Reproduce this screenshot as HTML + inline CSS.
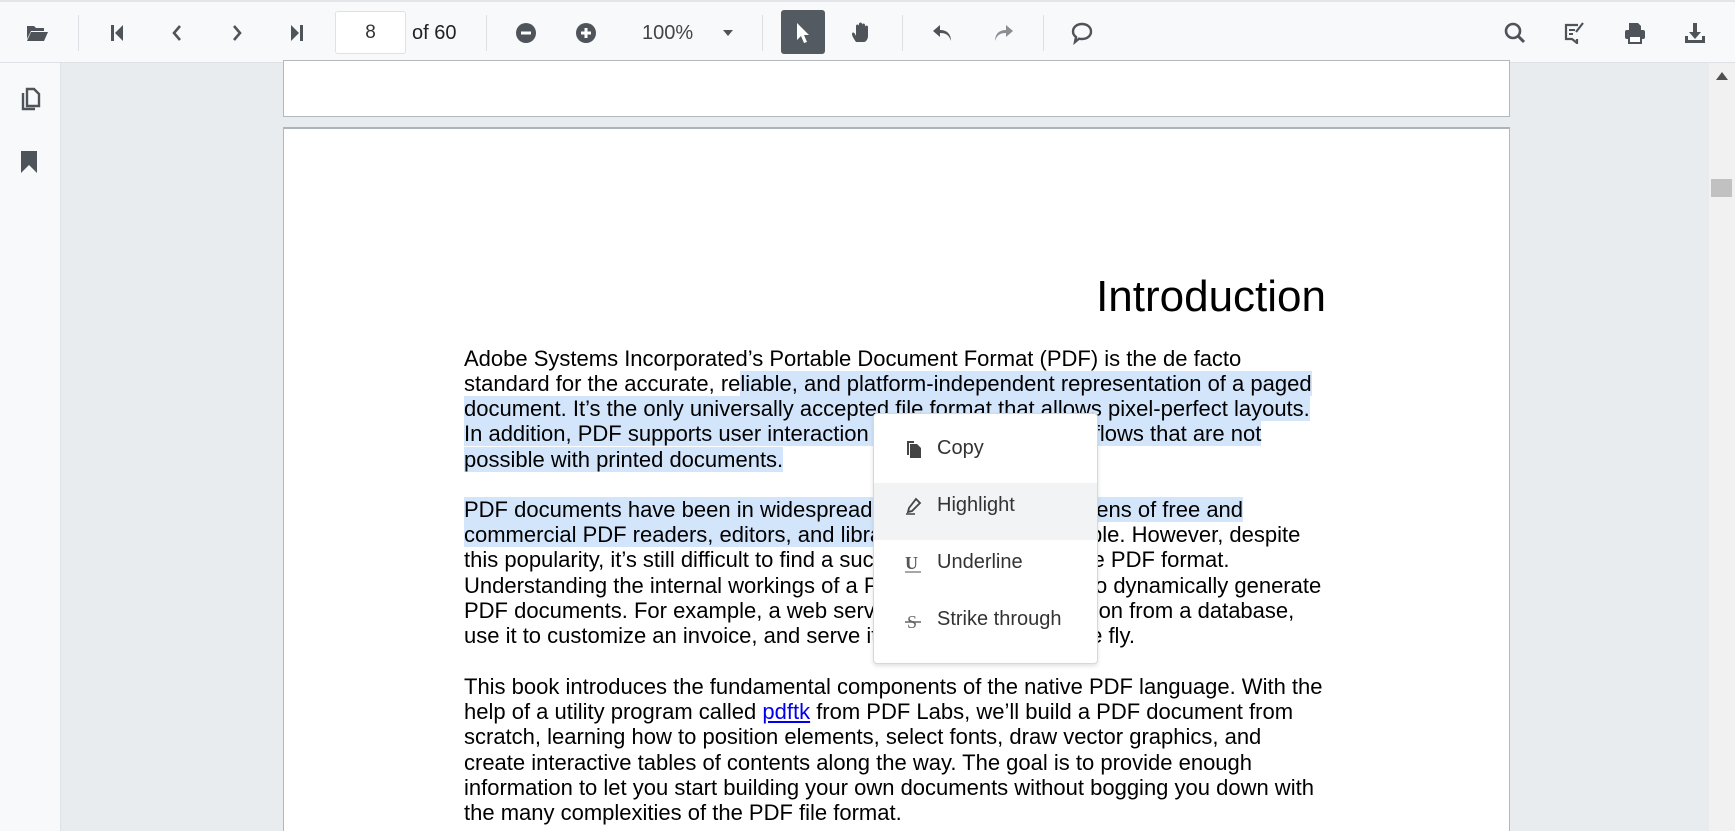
<!DOCTYPE html>
<html style="overflow:hidden;width:1735px;height:831px"><head><meta charset="utf-8"><style>
*{margin:0;padding:0;box-sizing:border-box}
body{width:1735px;height:831px;overflow:hidden;background:#e9ecef;font-family:"Liberation Sans",Arial,sans-serif;position:relative}
.tb{position:absolute;left:0;top:0;width:1735px;height:63px;background:#f8f9fa;border-bottom:1px solid #dee2e6;border-top:2px solid #e3e5e8}
.ic{position:absolute;top:31px;transform:translate(-50%,-50%)}
.sep{position:absolute;top:13px;width:1px;height:36px;background:#dcdfe3}
.side{position:absolute;left:0;top:63px;width:61px;height:768px;background:#f8f9fa;border-right:1px solid #dee2e6}
.page{position:absolute;left:283px;width:1227px;background:#fff;border:1px solid #b3b8bd}
.ln{position:absolute;left:464px;font-size:22px;line-height:25px;height:25px;white-space:nowrap;color:#000}
.hl{background:#d3e5fb}
.menu{position:absolute;left:873px;top:413px;width:225px;height:251px;background:#fff;border:1px solid #d6d9dc;border-radius:4px;box-shadow:0 2px 4px rgba(0,0,0,.12)}
.mi{position:absolute;left:0;width:223px;height:57px;font-size:20px;color:#333}
.mi span{position:absolute;left:63px;top:11px}
.mi svg{position:absolute;left:30px;top:14px}
</style></head><body>
<div class="tb">
<svg class="ic" style="left:37px" width="22" height="18" viewBox="0 0 22 18"><path d="M1 2h7l2 2h8v3H5L1 15z" fill="#4f545a"/><path d="M5 8h17l-4 9H1z" fill="#4f545a"/></svg>
<div class="sep" style="left:78px"></div>
<svg class="ic" style="left:117px" width="14" height="18" viewBox="0 0 14 18"><rect x="1" y="1" width="3" height="16" fill="#4f545a"/><path d="M13 1v16L5 9z" fill="#4f545a"/></svg>
<svg class="ic" style="left:177px" width="12" height="18" viewBox="0 0 12 18"><path d="M9 2L3 9l6 7" stroke="#4f545a" stroke-width="2.6" fill="none"/></svg>
<svg class="ic" style="left:237px" width="12" height="18" viewBox="0 0 12 18"><path d="M3 2l6 7-6 7" stroke="#4f545a" stroke-width="2.6" fill="none"/></svg>
<svg class="ic" style="left:297px" width="14" height="18" viewBox="0 0 14 18"><rect x="10" y="1" width="3" height="16" fill="#4f545a"/><path d="M1 1v16l8-8z" fill="#4f545a"/></svg>
<div style="position:absolute;left:335px;top:9px;width:71px;height:43px;background:#fff;border:1px solid #dee2e6;border-radius:3px;font-size:19px;text-align:center;line-height:41px;color:#333">8</div>
<div style="position:absolute;left:412px;top:20px;font-size:20px;color:#222">of 60</div>
<div class="sep" style="left:486px"></div>
<svg class="ic" style="left:526px" width="22" height="22" viewBox="0 0 22 22"><circle cx="11" cy="11" r="10" fill="#4f545a"/><rect x="6" y="9.5" width="10" height="3" fill="#fff"/></svg>
<svg class="ic" style="left:586px" width="22" height="22" viewBox="0 0 22 22"><circle cx="11" cy="11" r="10" fill="#4f545a"/><rect x="6" y="9.5" width="10" height="3" fill="#fff"/><rect x="9.5" y="6" width="3" height="10" fill="#fff"/></svg>
<div style="position:absolute;left:642px;top:20px;font-size:20px;color:#444">100%</div>
<svg class="ic" style="left:728px" width="10" height="6" viewBox="0 0 10 6"><path d="M0 0h10L5 6z" fill="#4f545a"/></svg>
<div class="sep" style="left:762px"></div>
<div style="position:absolute;left:781px;top:8px;width:44px;height:44px;background:#545a61;border-radius:3px"></div>
<svg class="ic" style="left:803px" width="14" height="22" viewBox="0 0 14 22"><path d="M1 1v17l4-4 3 7 3-1-3-7h5z" fill="#fff"/></svg>
<svg class="ic" style="left:862px" width="22" height="22" viewBox="0 0 22 22"><path d="M5 20c-2-3-4-6-4-8 0-2 2-2 3 0l1 2V4c0-2 3-2 3 0V2c0-2 3-2 3 0v1c0-2 3-2 3 0v2c0-2 3-2 3 0v9c0 3-2 6-4 6z" fill="#4f545a"/></svg>
<div class="sep" style="left:902px"></div>
<svg class="ic" style="left:943px" width="22" height="20" viewBox="0 0 22 20"><path d="M8 2L1 8l7 6v-4c6 0 9 2 11 8 0-7-4-11-11-11z" fill="#4f545a"/></svg>
<svg class="ic" style="left:1003px" width="22" height="20" viewBox="0 0 22 20"><path d="M14 2l7 6-7 6v-4c-6 0-9 2-11 8 0-7 4-11 11-11z" fill="#8b8f94"/></svg>
<div class="sep" style="left:1043px"></div>
<svg class="ic" style="left:1082px" width="24" height="24" viewBox="0 0 24 24"><path d="M12 3c5 0 9 3 9 7.5S17 18 12 18c-1 0-2 0-3-.3L5 21l1-5c-2-1.5-3-3.5-3-5.5C3 6 7 3 12 3z" stroke="#4f545a" stroke-width="2.4" fill="none"/></svg>
<svg class="ic" style="left:1515px" width="22" height="22" viewBox="0 0 22 22"><circle cx="9" cy="9" r="7" stroke="#4f545a" stroke-width="2.6" fill="none"/><path d="M14 14l6 6" stroke="#4f545a" stroke-width="3"/></svg>
<svg class="ic" style="left:1575px" width="22" height="22" viewBox="0 0 22 22"><path d="M14 3H2v14h6l5 4v-4" stroke="#4f545a" stroke-width="2.2" fill="none"/><path d="M5 8h6M5 12h4" stroke="#4f545a" stroke-width="2"/><path d="M19 1l-7 9" stroke="#4f545a" stroke-width="2.2"/></svg>
<svg class="ic" style="left:1635px" width="22" height="22" viewBox="0 0 22 22"><path d="M5 1h9l3 3v4H5z" fill="#4f545a"/><rect x="1" y="8" width="20" height="9" rx="2" fill="#4f545a"/><rect x="5" y="14" width="12" height="7" fill="#fff" stroke="#4f545a" stroke-width="2"/></svg>
<svg class="ic" style="left:1695px" width="22" height="22" viewBox="0 0 22 22"><path d="M9 1h4v9h4l-6 7-6-7h4z" fill="#4f545a"/><rect x="1" y="18" width="20" height="3" fill="#4f545a"/><rect x="1" y="14" width="3" height="6" fill="#4f545a"/><rect x="18" y="14" width="3" height="6" fill="#4f545a"/></svg>
</div>
<div class="side">
<svg style="position:absolute;left:19px;top:24px" width="22" height="24" viewBox="0 0 22 24"><path d="M8 2h7l5 5v12H8z" stroke="#4f545a" stroke-width="2.4" fill="none"/><path d="M4 6v16h12" stroke="#4f545a" stroke-width="2.4" fill="none"/></svg>
<svg style="position:absolute;left:20px;top:88px" width="18" height="22" viewBox="0 0 18 22"><path d="M1 0h16v22l-8-8-8 8z" fill="#4f545a"/></svg>
</div>
<div class="page" style="top:60px;height:57px"></div>
<div class="page" style="top:127px;height:704px;border-bottom:none;border-top:2px solid #adb3b9"></div>
<div style="position:absolute;left:1709px;top:63px;width:26px;height:768px;background:#f1f1f1"></div>
<svg style="position:absolute;left:1716px;top:72px" width="12" height="8" viewBox="0 0 12 8"><path d="M6 0l6 8H0z" fill="#505050"/></svg>
<div style="position:absolute;left:1711px;top:179px;width:21px;height:18px;background:#c1c1c1"></div>
<div style="position:absolute;right:409px;top:272px;font-size:44px;color:#000">Introduction</div>
<div class="ln" style="top:346px">Adobe Systems Incorporated’s Portable Document Format (PDF) is the de facto</div>
<div class="ln" style="top:371px">standard for the accurate, re<span class="hl">liable, and platform-independent representation of a paged</span></div>
<div class="ln" style="top:396px"><span class="hl">document. It’s the only universally accepted file format that allows pixel-perfect layouts.</span></div>
<div class="ln" style="top:421px"><span class="hl">In addition, PDF supports user interaction and collaborative workflows that are not</span></div>
<div class="ln" style="top:447px"><span class="hl">possible with printed documents.</span></div>
<div class="ln" style="top:497px"><span class="hl">PDF documents have been in widespread use for years, and dozens of free and</span></div>
<div class="ln" style="top:522px"><span class="hl">commercial PDF readers, editors, and libra</span>ries are readily available. However, despite</div>
<div class="ln" style="top:547px">this popularity, it’s still difficult to find a succinct guide to the native PDF format.</div>
<div class="ln" style="top:573px">Understanding the internal workings of a PDF makes it possible to dynamically generate</div>
<div class="ln" style="top:598px">PDF documents. For example, a web server can extract information from a database,</div>
<div class="ln" style="top:623px">use it to customize an invoice, and serve it to the customer on the fly.</div>
<div class="ln" style="top:674px">This book introduces the fundamental components of the native PDF language. With the</div>
<div class="ln" style="top:699px">help of a utility program called <span style="color:#00e;text-decoration:underline">pdftk</span> from PDF Labs, we’ll build a PDF document from</div>
<div class="ln" style="top:724px">scratch, learning how to position elements, select fonts, draw vector graphics, and</div>
<div class="ln" style="top:750px">create interactive tables of contents along the way. The goal is to provide enough</div>
<div class="ln" style="top:775px">information to let you start building your own documents without bogging you down with</div>
<div class="ln" style="top:800px">the many complexities of the PDF file format.</div>
<div class="menu">
<div class="mi" style="top:12px"><svg width="18" height="18" viewBox="0 0 18 18"><path d="M3 1h7v2H5v12H3z" fill="#444"/><path d="M6 4h7l4 4v10H6z" fill="#444"/></svg><span>Copy</span></div>
<div class="mi" style="top:69px;background:#f2f3f5"><svg width="18" height="18" viewBox="0 0 18 18"><path d="M12 2l4 4-8 8-4 1 1-4z" stroke="#444" stroke-width="1.8" fill="none"/><path d="M2 17h9" stroke="#444" stroke-width="1.5"/></svg><span>Highlight</span></div>
<div class="mi" style="top:126px"><svg width="18" height="20" viewBox="0 0 18 20"><text x="1" y="15" font-family="Liberation Serif" font-weight="bold" font-size="18" fill="#555">U</text><path d="M1 18h16" stroke="#888" stroke-width="1.5"/></svg><span>Underline</span></div>
<div class="mi" style="top:183px"><svg width="18" height="20" viewBox="0 0 18 20"><text x="3" y="17" font-family="Liberation Serif" font-size="18" fill="#666">S</text><path d="M1 11h16" stroke="#666" stroke-width="1.5"/></svg><span>Strike through</span></div>
</div>
</body></html>
